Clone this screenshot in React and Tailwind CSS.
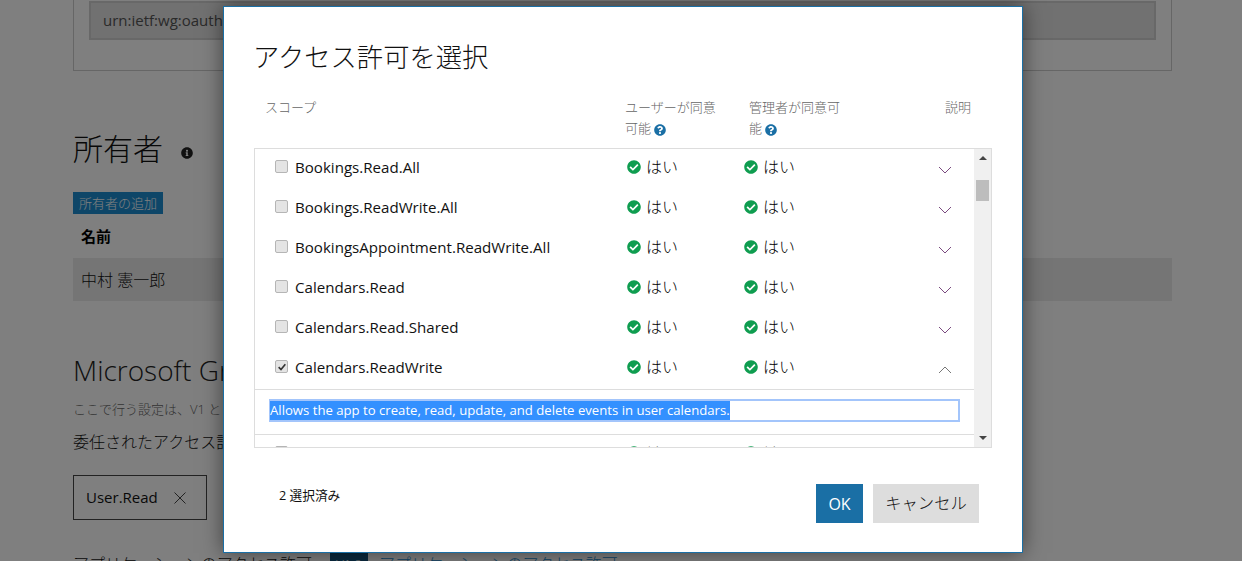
import { FaCheckCircle, FaQuestionCircle, FaInfoCircle } from 'react-icons/fa';

const scopes = [
  { name: 'Bookings.Read.All' },
  { name: 'Bookings.ReadWrite.All' },
  { name: 'BookingsAppointment.ReadWrite.All' },
  { name: 'Calendars.Read' },
  { name: 'Calendars.Read.Shared' },
  { name: 'Calendars.ReadWrite', checked: true, open: true },
  { name: 'Calendars.ReadWrite.Shared' },
];

const fontStack = { fontFamily: '"Open Sans", "Noto Sans CJK JP", sans-serif' };

function Checkbox({ checked }) {
  return (
    <span className="flex h-[13px] w-[13px] shrink-0 items-center justify-center rounded-[2px] border border-[#b5b5b5] bg-[#e4e4e4]">
      {checked && (
        <svg viewBox="0 0 12 12" className="h-2.5 w-2.5">
          <path d="M2 6.2 4.8 9 10 2.8" fill="none" stroke="#333" strokeWidth="2" />
        </svg>
      )}
    </span>
  );
}

function Yes() {
  return (
    <span className="flex items-center gap-[5px] text-[16px] font-light leading-5 text-black">
      <FaCheckCircle className="h-[14px] w-[14px] text-[#0f9d50]" />
      はい
    </span>
  );
}

function Chevron({ up }) {
  return (
    <svg viewBox="0 0 14 8" className="h-2 w-3.5">
      <path d={up ? 'M1 7 7 1l6 6' : 'M1 1l6 6 6-6'} fill="none" stroke={up ? '#777' : '#7a4a80'} strokeWidth="1" />
    </svg>
  );
}

function ScopeRow({ scope }) {
  return (
    <>
      <div className="grid h-10 grid-cols-[352px_117px_194px_1fr] items-center pl-5 pb-1 text-[15.1px]">
        <div className="flex items-center gap-[7px] text-[#111]">
          <Checkbox checked={scope.checked} />
          {scope.name}
        </div>
        <Yes />
        <Yes />
        <div className="pt-1.5">
          <Chevron up={scope.open} />
        </div>
      </div>
      {scope.open && (
        <div className="flex h-[46px] items-center border-y border-[#ddd] pb-1 pl-[14px] pr-[14px]">
          <div className="h-[23px] w-full border-2 border-[#a3c5fb] text-[13.15px] leading-[19px] text-white">
            <span className="-ml-px inline-block h-[19px] bg-[#3390ff]">Allows the app to create, read, update, and delete events in user calendars.</span>
          </div>
        </div>
      )}
    </>
  );
}

function Scrollbar() {
  return (
    <div className="relative flex w-[17px] shrink-0 flex-col items-center justify-between bg-[#f0f0f0]">
      <span className="mt-[7px] h-0 w-0 border-x-[4px] border-b-[4px] border-x-transparent border-b-[#444]" />
      <span className="absolute top-[31px] left-0.5 h-[21px] w-[13px] bg-[#bdbdbd]" />
      <span className="mb-[7px] h-0 w-0 border-x-[4px] border-t-[4px] border-x-transparent border-t-[#444]" />
    </div>
  );
}

function Modal() {
  return (
    <div className="absolute left-[223px] top-[6px] z-20 h-[547px] w-[800px] border border-[#1a6fa5] bg-white px-[30px] shadow-[0_0_20px_rgba(0,0,0,0.5)]">
      <h2 className="-ml-px mt-[32px] text-[26.3px] font-light leading-9 text-[#111]">アクセス許可を選択</h2>
      <div className="mt-[21px] grid h-[52px] grid-cols-[360px_124px_196px_1fr] pl-[11px] pt-px text-[13px] font-light leading-[21px] text-[#666]">
        <div>スコープ</div>
        <div className="w-[96px]">
          ユーザーが同意可能 <FaQuestionCircle className="inline h-3 w-3 text-[#1a6fa5]" />
        </div>
        <div className="w-[96px]">
          管理者が同意可能 <FaQuestionCircle className="inline h-3 w-3 text-[#1a6fa5]" />
        </div>
        <div>説明</div>
      </div>
      <div className="flex h-[300px] w-[738px] overflow-hidden border border-[#ddd]">
        <div className="flex-1 overflow-hidden">
          {scopes.map((s) => (
            <ScopeRow key={s.name} scope={s} />
          ))}
        </div>
        <Scrollbar />
      </div>
      <div className="mt-[36px] flex items-start justify-between pl-[25px] pr-[13px]">
        <div className="pt-[3px] text-[12.7px] leading-4 text-[#111]">2 選択済み</div>
        <div className="flex gap-2.5">
          <button className="h-[39px] w-[47px] bg-[#1a6fa5] text-[16px] text-white">OK</button>
          <button className="h-[39px] w-[106px] bg-[#dddddd] text-[16.3px] font-light text-[#111]">キャンセル</button>
        </div>
      </div>
    </div>
  );
}

function Page() {
  return (
    <div className="mx-[73px] w-[1099px] text-[#111]">
      <div className="h-[71px] border border-t-0 border-[#ccc] px-[15px] pt-px">
        <div className="flex h-[39px] w-[1067px] items-center border-2 border-[#d0d0d0] bg-[#e2e2e2] px-3 text-[15px] text-[#555]">
          urn:ietf:wg:oauth:2.0:oob
        </div>
      </div>
      <div className="mt-[60px] flex items-center gap-[18px]">
        <h1 className="text-[30px] font-light leading-9">所有者</h1>
        <FaInfoCircle className="mt-[7px] h-3 w-3 text-[#222]" />
      </div>
      <button className="mt-[25px] block h-[22px] w-[90px] bg-[#1c8cd0] text-[13px] font-light leading-[22px] text-white">所有者の追加</button>
      <div className="h-[44px] pl-2 pt-[12px] text-[15px] font-bold leading-5 text-black">名前</div>
      <div className="flex h-[43px] items-center bg-[#ebebeb] pl-2 text-[16px] font-light">中村 憲一郎</div>
      <h2 className="mt-[51px] text-[28px] font-light leading-9 text-[#222]">Microsoft Graph</h2>
      <p className="mt-[11px] text-[13px] font-light leading-5 text-[#666]">ここで行う設定は、V1 と</p>
      <p className="mt-[11px] text-[16px] font-light leading-6">委任されたアクセス許可</p>
      <div className="mt-[21px] flex h-[45px] w-[134px] items-center justify-between border border-[#444] pl-3 pr-5 text-[15px]">
        User.Read
        <svg viewBox="0 0 12 12" className="h-3 w-3">
          <path d="M0.5 0.5l11 11M11.5 0.5l-11 11" fill="none" stroke="#444" strokeWidth="1" />
        </svg>
      </div>
      <div className="mt-[32px] flex items-start text-[16px] font-light leading-6">
        アプリケーションのアクセス許可
        <span className="ml-[18px] h-6 w-[38px] bg-[#15557e] text-center text-[13px] text-white">V1.0</span>
        <span className="ml-[11px] text-[#1c8cd0]">アプリケーションのアクセス許可</span>
      </div>
    </div>
  );
}

export default function App() {
  return (
    <div className="relative h-[561px] w-[1242px] overflow-hidden bg-white" style={fontStack}>
      <Page />
      <div className="absolute inset-0 z-10 bg-black/50" />
      <Modal />
    </div>
  );
}
